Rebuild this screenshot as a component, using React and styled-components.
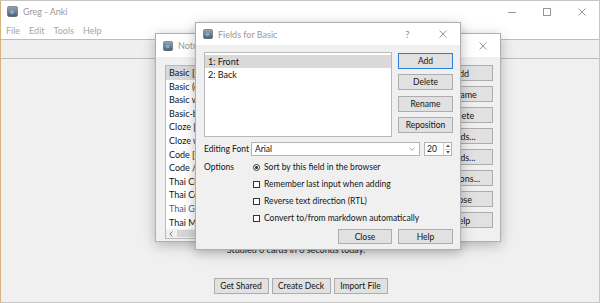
import React from "react"
import styled, { createGlobalStyle } from "styled-components"

const GlobalStyle = createGlobalStyle`
  html, body { margin: 0; padding: 0; }
  body {
    width: 600px;
    height: 303px;
    overflow: hidden;
    background: #fff;
    color: #141414;
    font-family: Lato, "Noto Sans", "DejaVu Sans", sans-serif;
    font-size: 8.5px;
  }
  * { box-sizing: border-box; }
`

const Desktop = styled.div`
  position: relative;
  width: 600px;
  height: 303px;
  overflow: hidden;
`

/* ---------- window chrome ---------- */

const MainWindow = styled.div`
  width: 600px;
  height: 303px;
  display: flex;
  flex-direction: column;
  background: #f0f0f0;
  border: 1px solid #c6c6c6;
  border-left-color: #d6b27c;
`

const Window = styled.div`
  position: absolute;
  left: ${p => p.$x}px;
  top: ${p => p.$y}px;
  width: ${p => p.$w}px;
  height: ${p => p.$h}px;
  display: flex;
  flex-direction: column;
  background: #f0f0f0;
  border: 1px solid rgba(0, 0, 0, 0.27);
  box-shadow: 0 3px 12px rgba(0, 0, 0, 0.26);
`

const TitleBar = styled.div`
  flex: none;
  height: ${p => p.$h}px;
  display: flex;
  align-items: center;
  padding-left: ${p => p.$pad}px;
  background: #fff;
`

const TitleText = styled.span`
  margin-left: 5px;
  color: #9a9a9a;
  font-size: 9px;
  white-space: nowrap;
`

const Controls = styled.div`
  margin-left: auto;
  display: flex;
  height: 100%;
`

const ControlButton = styled.div`
  width: 35px;
  height: 100%;
  display: flex;
  align-items: center;
  justify-content: center;
  color: #8f8f8f;
  font-size: 9.5px;
`

const AnkiIcon = ({ size = 10 }) => (
  <svg width={size} height={size} viewBox="0 0 16 16">
    <defs>
      <linearGradient id="ankiCard" x1="0" y1="0" x2="0" y2="1">
        <stop offset="0" stopColor="#9aa5b1" />
        <stop offset="1" stopColor="#4f5c6a" />
      </linearGradient>
    </defs>
    <rect x="0.5" y="0.5" width="15" height="15" rx="3" fill="url(#ankiCard)" stroke="#3e4854" strokeWidth="0.7" />
    <path
      d="M7 4.2 L8.2 7.2 L11.4 7.3 L8.9 9.2 L9.8 12.3 L7 10.5 L4.2 12.3 L5.1 9.2 L2.6 7.3 L5.8 7.2 Z"
      fill="#74b6ec"
      transform="rotate(-14 7 8)"
    />
  </svg>
)

const CloseGlyph = () => (
  <svg width="8" height="8" viewBox="0 0 8 8">
    <path d="M0.5 0.5 L7.5 7.5 M7.5 0.5 L0.5 7.5" stroke="#8c8c8c" strokeWidth="0.9" />
  </svg>
)

const MinGlyph = () => (
  <svg width="8" height="8" viewBox="0 0 8 8">
    <path d="M0 4.5 H8" stroke="#8c8c8c" strokeWidth="0.9" />
  </svg>
)

const MaxGlyph = () => (
  <svg width="8" height="8" viewBox="0 0 8 8">
    <rect x="0.5" y="0.5" width="7" height="7" fill="none" stroke="#8c8c8c" strokeWidth="0.9" />
  </svg>
)

/* ---------- main window parts ---------- */

const MenuBar = styled.div`
  flex: none;
  height: 17px;
  display: flex;
  align-items: center;
  gap: 9px;
  padding-left: 5px;
  background: #fff;
  color: #a8a5a1;
  font-size: 9px;
`

const ToolbarBand = styled.div`
  flex: none;
  height: 20px;
  background: #efefef;
  border-top: 1px solid #bdbdbd;
  border-bottom: 1px solid #bdbdbd;
`

const DeckArea = styled.div`
  flex: 1;
  display: flex;
  flex-direction: column;
  align-items: center;
  justify-content: flex-end;
  padding-bottom: 8px;
  background: #f0f0f0;
`

const Studied = styled.div`
  height: 11px;
  line-height: 11px;
  margin-bottom: 23px;
  color: #222;
  font-size: 9px;
  padding-right: 8px;
`

const BottomRow = styled.div`
  display: flex;
  gap: 3px;
  padding-left: 1px;
`

const Button = styled.div`
  width: ${p => p.$w}px;
  height: ${p => p.$h || 16}px;
  display: flex;
  align-items: center;
  justify-content: center;
  flex: none;
  background: #e1e1e1;
  border: 1px solid ${p => (p.$default ? "#2a7fd4" : "#adadad")};
  color: #141414;
  white-space: nowrap;
  overflow: hidden;
`

/* ---------- list boxes ---------- */

const ListBox = styled.div`
  display: flex;
  flex-direction: column;
  background: #fff;
  border: 1px solid #b9b9b9;
  padding-top: ${p => p.$padTop || 0}px;
  overflow: hidden;
`

const Rows = styled.div`
  flex: 1;
  overflow: hidden;
`

const Row = styled.div`
  height: ${p => p.$h}px;
  line-height: ${p => p.$h}px;
  padding-left: 3px;
  white-space: nowrap;
  font-size: 9px;
  background: ${p => (p.$selected ? "#d9d9d9" : "transparent")};
  color: ${p => (p.$tint ? "#46648c" : "#141414")};
`

const HScroll = styled.div`
  flex: none;
  height: 9px;
  display: flex;
  background: #f0f0f0;
`

const ScrollArrow = styled.div`
  width: 10px;
  display: flex;
  align-items: center;
  justify-content: center;
`

const ScrollThumb = styled.div`
  flex: 1;
  margin: 1px 0 1px 1px;
  background: #d6d6d6;
`

/* ---------- note types window ---------- */

const NoteTypesBody = styled.div`
  flex: 1;
  display: flex;
  gap: 8px;
  padding: 8px 7px 13px 9px;
`

const SideButtons = styled.div`
  width: 64px;
  display: flex;
  flex-direction: column;
  gap: 5px;
  font-size: 9px;
`

/* ---------- fields dialog ---------- */

const DialogBody = styled.div`
  flex: 1;
  display: flex;
  flex-direction: column;
  padding: 7px 7px 6px 8px;
`

const TopSection = styled.div`
  display: flex;
  gap: 6px;
  height: 85px;
`

const FieldButtons = styled.div`
  width: 55px;
  padding-top: 1px;
  display: flex;
  flex-direction: column;
  gap: 5.3px;
`

const FormGrid = styled.div`
  display: grid;
  grid-template-columns: 47px 1fr;
  align-items: center;
  white-space: nowrap;
`

const FontRow = styled(FormGrid)`
  margin-top: 5px;
  height: 14px;
`

const FontControls = styled.div`
  display: flex;
  gap: 4px;
  height: 14px;
  padding-right: 1px;
`

const Combo = styled.div`
  flex: 1;
  display: flex;
  align-items: center;
  justify-content: space-between;
  padding: 0 4px 0 3px;
  background: #fff;
  border: 1px solid #b4b4b4;
`

const Spin = styled.div`
  width: 28px;
  display: flex;
  background: #fff;
  border: 1px solid #b4b4b4;
`

const SpinValue = styled.div`
  flex: 1;
  padding-left: 2px;
  display: flex;
  align-items: center;
`

const SpinArrows = styled.div`
  width: 8px;
  display: flex;
  flex-direction: column;
  border-left: 1px solid #d0d0d0;
  & > div {
    flex: 1;
    display: flex;
    align-items: center;
    justify-content: center;
  }
  & > div + div { border-top: 1px solid #d0d0d0; }
`

const OptionsGrid = styled(FormGrid)`
  margin-top: 2.5px;
  grid-auto-rows: 17px;
`

const OptionLabel = styled.div`
  grid-column: 1;
  grid-row: 1;
`

const Option = styled.label`
  grid-column: 2;
  display: flex;
  align-items: center;
  gap: 4px;
  padding-left: 2px;
`

const Radio = styled.span`
  width: 7px;
  height: 7px;
  border-radius: 50%;
  border: 1px solid #333;
  display: flex;
  align-items: center;
  justify-content: center;
  background: #fff;
  &::after {
    content: "";
    width: 3px;
    height: 3px;
    border-radius: 50%;
    background: #222;
  }
`

const Check = styled.span`
  width: 7px;
  height: 7px;
  border: 1px solid #333;
  background: #fff;
`

const DialogFooter = styled.div`
  margin-top: 2.5px;
  display: flex;
  justify-content: flex-end;
  gap: 6px;
`

const noteTypes = [
  "Basic [2 notes]",
  "Basic (optional reversed card) [0 notes]",
  "Basic with hint [0 notes]",
  "Basic-bidirectional [0 notes]",
  "Cloze [0 notes]",
  "Cloze with extra [0 notes]",
  "Code [0 notes]",
  "Code / Output [0 notes]",
  "Thai Characters [0 notes]",
  "Thai Consonants [0 notes]",
  "Thai Glossary [0 notes]",
  "Thai Mnemonics [0 notes]",
]

const noteTypeButtons = ["Add", "Rename", "Delete", "Fields...", "Cards...", "Options...", "Close", "Help"]

const App = () => (
  <Desktop>
    <GlobalStyle />

    <MainWindow>
      <TitleBar $h={21} $pad={6}>
        <AnkiIcon size={11} />
        <TitleText>Greg - Anki</TitleText>
        <Controls>
          <ControlButton><MinGlyph /></ControlButton>
          <ControlButton><MaxGlyph /></ControlButton>
          <ControlButton><CloseGlyph /></ControlButton>
        </Controls>
      </TitleBar>
      <MenuBar>
        <span>File</span>
        <span>Edit</span>
        <span>Tools</span>
        <span>Help</span>
      </MenuBar>
      <ToolbarBand />
      <DeckArea>
        <Studied>Studied 0 cards in 0 seconds today.</Studied>
        <BottomRow>
          <Button $w={55}>Get Shared</Button>
          <Button $w={59}>Create Deck</Button>
          <Button $w={54}>Import File</Button>
        </BottomRow>
      </DeckArea>
    </MainWindow>

    <Window $x={155} $y={33} $w={346} $h={209}>
      <TitleBar $h={23} $pad={7}>
        <AnkiIcon size={10} />
        <TitleText>Note Types</TitleText>
        <Controls>
          <ControlButton><CloseGlyph /></ControlButton>
        </Controls>
      </TitleBar>
      <NoteTypesBody>
        <ListBox style={{ flex: 1 }}>
          <Rows>
            {noteTypes.map((name, i) => (
              <Row key={name} $h={13.6} $selected={i === 0} $tint={i === 10}>{name}</Row>
            ))}
          </Rows>
          <HScroll>
            <ScrollArrow>
              <svg width="4" height="6" viewBox="0 0 4 6">
                <path d="M3.5 0.5 L0.8 3 L3.5 5.5" fill="none" stroke="#606060" strokeWidth="0.9" />
              </svg>
            </ScrollArrow>
            <ScrollThumb />
          </HScroll>
        </ListBox>
        <SideButtons>
          {noteTypeButtons.map(label => (
            <Button key={label} $w={64}>{label}</Button>
          ))}
        </SideButtons>
      </NoteTypesBody>
    </Window>

    <Window $x={195} $y={22} $w={266} $h={228}>
      <TitleBar $h={22} $pad={7}>
        <AnkiIcon size={10} />
        <TitleText>Fields for Basic</TitleText>
        <Controls>
          <ControlButton>?</ControlButton>
          <ControlButton><CloseGlyph /></ControlButton>
        </Controls>
      </TitleBar>
      <DialogBody>
        <TopSection>
          <ListBox $padTop={2} style={{ flex: 1 }}>
            <Rows>
              <Row $h={13} $selected>1: Front</Row>
              <Row $h={13}>2: Back</Row>
            </Rows>
          </ListBox>
          <FieldButtons>
            <Button $w={55} $default>Add</Button>
            <Button $w={55}>Delete</Button>
            <Button $w={55}>Rename</Button>
            <Button $w={55}>Reposition</Button>
          </FieldButtons>
        </TopSection>

        <FontRow>
          <span>Editing Font</span>
          <FontControls>
            <Combo>
              <span>Arial</span>
              <svg width="6" height="4" viewBox="0 0 6 4">
                <path d="M0.5 0.7 L3 3.2 L5.5 0.7" fill="none" stroke="#8a8a8a" strokeWidth="0.8" />
              </svg>
            </Combo>
            <Spin>
              <SpinValue>20</SpinValue>
              <SpinArrows>
                <div>
                  <svg width="4" height="3" viewBox="0 0 4 3"><path d="M0 3 L2 0.5 L4 3 Z" fill="#555" /></svg>
                </div>
                <div>
                  <svg width="4" height="3" viewBox="0 0 4 3"><path d="M0 0 L2 2.5 L4 0 Z" fill="#555" /></svg>
                </div>
              </SpinArrows>
            </Spin>
          </FontControls>
        </FontRow>

        <OptionsGrid>
          <OptionLabel>Options</OptionLabel>
          <Option><Radio />Sort by this field in the browser</Option>
          <Option><Check />Remember last input when adding</Option>
          <Option><Check />Reverse text direction (RTL)</Option>
          <Option><Check />Convert to/from markdown automatically</Option>
        </OptionsGrid>

        <DialogFooter>
          <Button $w={54} $h={15}>Close</Button>
          <Button $w={55} $h={15}>Help</Button>
        </DialogFooter>
      </DialogBody>
    </Window>
  </Desktop>
)

export default App
